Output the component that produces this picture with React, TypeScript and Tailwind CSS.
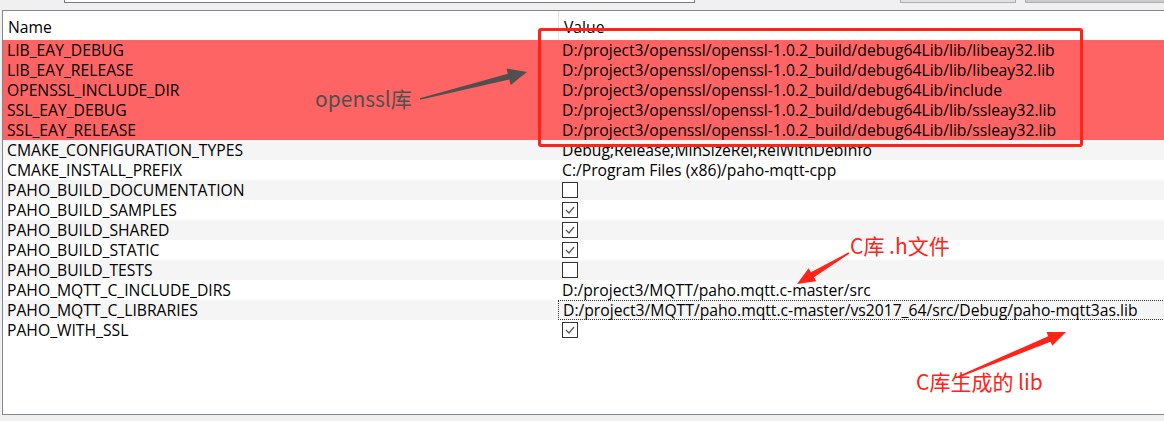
import React from "react";

type Row = { name: string; value?: string; check?: boolean; red?: boolean };

const rows: Row[] = [
  { name: "LIB_EAY_DEBUG", value: "D:/project3/openssl/openssl-1.0.2_build/debug64Lib/lib/libeay32.lib", red: true },
  { name: "LIB_EAY_RELEASE", value: "D:/project3/openssl/openssl-1.0.2_build/debug64Lib/lib/libeay32.lib", red: true },
  { name: "OPENSSL_INCLUDE_DIR", value: "D:/project3/openssl/openssl-1.0.2_build/debug64Lib/include", red: true },
  { name: "SSL_EAY_DEBUG", value: "D:/project3/openssl/openssl-1.0.2_build/debug64Lib/lib/ssleay32.lib", red: true },
  { name: "SSL_EAY_RELEASE", value: "D:/project3/openssl/openssl-1.0.2_build/debug64Lib/lib/ssleay32.lib", red: true },
  { name: "CMAKE_CONFIGURATION_TYPES", value: "Debug;Release;MinSizeRel;RelWithDebInfo" },
  { name: "CMAKE_INSTALL_PREFIX", value: "C:/Program Files (x86)/paho-mqtt-cpp" },
  { name: "PAHO_BUILD_DOCUMENTATION", check: false },
  { name: "PAHO_BUILD_SAMPLES", check: true },
  { name: "PAHO_BUILD_SHARED", check: true },
  { name: "PAHO_BUILD_STATIC", check: true },
  { name: "PAHO_BUILD_TESTS", check: false },
  { name: "PAHO_MQTT_C_INCLUDE_DIRS", value: "D:/project3/MQTT/paho.mqtt.c-master/src" },
  { name: "PAHO_MQTT_C_LIBRARIES", value: "D:/project3/MQTT/paho.mqtt.c-master/vs2017_64/src/Debug/paho-mqtt3as.lib" },
  { name: "PAHO_WITH_SSL", check: true },
];

function Checkbox({ checked }: { checked: boolean }) {
  return (
    <div className="w-[16px] h-[16px] border border-[#333333] bg-white flex items-center justify-center">
      {checked && (
        <svg width="12" height="12" viewBox="0 0 12 12">
          <polyline points="2,6 5,9 10,3" fill="none" stroke="#555555" strokeWidth="1.2" />
        </svg>
      )}
    </div>
  );
}

// tapered arrow polygon from start to tip
function arrowPoints(x0: number, y0: number, x1: number, y1: number, w0: number, w1: number, L: number, H: number) {
  const dx = x1 - x0;
  const dy = y1 - y0;
  const len = Math.hypot(dx, dy);
  const ux = dx / len;
  const uy = dy / len;
  const nx = -uy;
  const ny = ux;
  const bx = x1 - ux * L;
  const by = y1 - uy * L;
  const p = [
    [x0 + (nx * w0) / 2, y0 + (ny * w0) / 2],
    [bx + (nx * w1) / 2, by + (ny * w1) / 2],
    [bx + (nx * H) / 2, by + (ny * H) / 2],
    [x1, y1],
    [bx - (nx * H) / 2, by - (ny * H) / 2],
    [bx - (nx * w1) / 2, by - (ny * w1) / 2],
    [x0 - (nx * w0) / 2, y0 - (ny * w0) / 2],
  ];
  return p.map((q) => q.join(",")).join(" ");
}

export default function App() {
  return (
    <div
      className="relative w-[1164px] h-[421px] bg-[#f0f0f0] overflow-hidden"
      style={{ fontFamily: '"Open Sans", "Noto Sans CJK SC", sans-serif' }}
    >
      {/* toolbar remnants */}
      <div className="flex h-[10px] items-start">
        <div className="ml-[64px] w-[634px] h-[3px] border-x border-b border-[#7a7a7a] bg-white" />
        <div className="ml-[205px] w-[116px] h-[3px] border-x border-b border-[#adadad] bg-[#e1e1e1]" />
        <div className="ml-[9px] w-[140px] h-[3px] border-l border-b border-[#adadad] bg-[#cccccc]" />
      </div>

      {/* property grid */}
      <div className="ml-[2px] w-[1170px] h-[405px] border border-[#828790] bg-white text-[15.7px] text-black leading-[20px]">
        <div className="flex h-[29px]">
          <div className="w-[555px] pl-[5px] pt-[6px]">Name</div>
          <div className="border-l border-[#e5e5e5] pl-[5px] pt-[6px]">Value</div>
        </div>
        {rows.map((r, i) => {
          const bg = r.red ? "bg-[#ff6464]" : i % 2 === 1 ? "bg-[#f5f5f5]" : "bg-white";
          const focus = r.name === "PAHO_MQTT_C_LIBRARIES";
          return (
            <div key={r.name} className={`flex h-[20px] ${bg}`}>
              <div className="w-[555px] pl-[4px] whitespace-nowrap">{r.name}</div>
              <div
                className={`flex-1 flex items-center pl-[4px] whitespace-nowrap ${
                  focus ? "border border-dotted border-[#333333] pl-[3px]" : ""
                }`}
              >
                {r.check !== undefined ? <Checkbox checked={r.check} /> : r.value}
              </div>
            </div>
          );
        })}
      </div>

      {/* annotations */}
      <div className="absolute left-[538px] top-[28px] w-[545px] h-[119px] border-[3px] border-[#ff2318] rounded-[3px]" />

      <div
        className="absolute left-[315px] top-[85px] text-[21px] leading-[26px] text-[#505050]"
        style={{ fontFamily: '"Noto Sans CJK SC", sans-serif' }}
      >
        openssl库
      </div>
      <div
        className="absolute left-[850px] top-[232px] text-[21px] leading-[26px] text-[#ff2318]"
        style={{ fontFamily: '"Noto Sans CJK SC", sans-serif' }}
      >
        C库 .h文件
      </div>
      <div
        className="absolute left-[916px] top-[368px] text-[21px] leading-[26px] text-[#ff2318]"
        style={{ fontFamily: '"Noto Sans CJK SC", sans-serif' }}
      >
        C库生成的 lib
      </div>

      <svg className="absolute left-0 top-0" width="1164" height="421" viewBox="0 0 1164 421">
        <polygon points={arrowPoints(420, 99, 527, 72, 1.5, 6, 19, 17)} fill="#505050" />
        <polygon points={arrowPoints(849, 253, 797, 284, 1.5, 6, 18, 15)} fill="#ff2318" />
        <polygon points={arrowPoints(958, 377, 1066, 332, 1.5, 6, 18, 15)} fill="#ff2318" />
      </svg>
    </div>
  );
}
